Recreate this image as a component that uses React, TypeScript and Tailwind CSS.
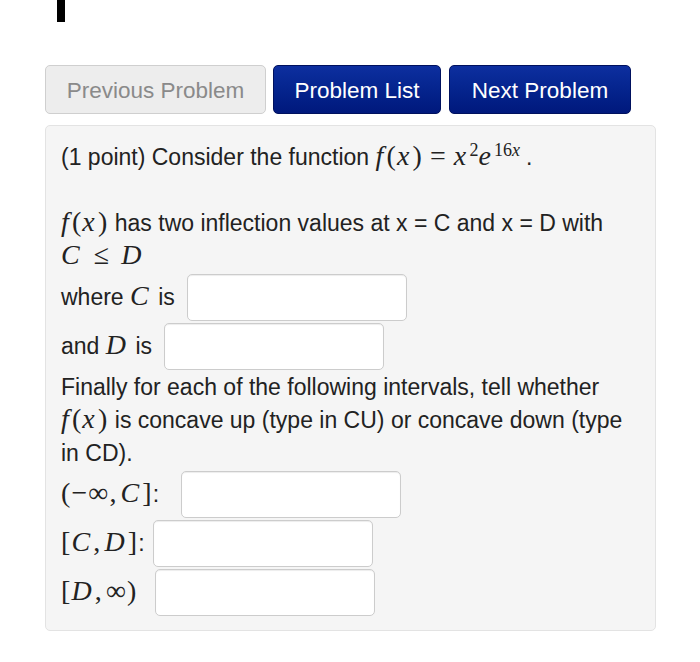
import type { ReactNode } from "react";

function M({ children }: { children: ReactNode }) {
  return (
    <span className="font-['Liberation_Serif',serif] text-[28px] leading-none tracking-[0.04em] whitespace-nowrap">
      {children}
    </span>
  );
}

function V({ children }: { children: ReactNode }) {
  return <i className="pr-[2px]">{children}</i>;
}

function Field({ className = "" }: { className?: string }) {
  return (
    <input
      type="text"
      className={`h-[47px] w-[220px] rounded-[5px] border border-[#cccccc] bg-white shadow-[inset_0_1px_1px_rgba(0,0,0,0.075)] ${className}`}
    />
  );
}

export default function App() {
  return (
    <div className="min-h-[662px] bg-white font-['Liberation_Sans',Arial,sans-serif] text-[#222]">
      <div className="ml-[57px] h-[22px] w-[8px] bg-black" />

      {/* nav buttons */}
      <div className="mt-[43px] ml-[45px] flex gap-[7px]">
        <button className="h-[49px] w-[221px] rounded-[5px] border border-[#cfcfcf] bg-[#ededed] pt-[2px] text-[22.5px] text-[#8a8a8a]">
          Previous Problem
        </button>
        <button className="h-[49px] w-[168px] rounded-[5px] border border-[#00115e] bg-gradient-to-b from-[#0d2f9f] to-[#00187c] pt-[2px] text-[22.5px] text-white">
          Problem List
        </button>
        <button className="ml-[1px] h-[49px] w-[182px] rounded-[5px] border border-[#00115e] bg-gradient-to-b from-[#0d2f9f] to-[#00187c] pt-[2px] text-[22.5px] text-white">
          Next Problem
        </button>
      </div>

      {/* problem body */}
      <div className="mt-[11px] ml-[45px] w-[611px] rounded-[5px] border border-[#e3e3e3] bg-[#f5f5f5] px-[15px] pt-[15px] pb-[14px] text-[23px] leading-[33px]">
        <div>
          (1 point) Consider the function{" "}
          <M>
            <V>f</V>(<V>x</V>)<span className="px-[7px]">=</span>
            <V>x</V>
            <sup className="text-[18px] tracking-normal">2</sup>
            <V>e</V>
            <sup className="text-[18px] tracking-normal">
              16<i>x</i>
            </sup>
          </M>
          <span className="ml-[6px]">.</span>
        </div>
        <div className="h-[33px]" />
        <div>
          <M>
            <V>f</V>(<V>x</V>)
          </M>{" "}
          has two inflection values at x = C and x = D with
          <br />
          <M>
            <V>C</V>
            <span className="px-[11px]">≤</span>
            <V>D</V>
          </M>
        </div>

        <div className="flex h-[49px] items-center">
          <span>
            where{" "}
            <M>
              <V>C</V>
            </M>{" "}
            is
          </span>
          <Field className="ml-[12px]" />
        </div>
        <div className="flex h-[49px] items-center">
          <span>
            and{" "}
            <M>
              <V>D</V>
            </M>{" "}
            is
          </span>
          <Field className="ml-[12px]" />
        </div>

        <p>
          Finally for each of the following intervals, tell whether
          <br />
          <M>
            <V>f</V>(<V>x</V>)
          </M>{" "}
          is concave up (type in CU) or concave down (type
          <br />
          in CD).
        </p>

        <div className="flex h-[48px] items-center">
          <span>
            <M>
              (−∞,<span className="ml-[3px]" />
              <V>C</V>]
            </M>
            :
          </span>
          <Field className="ml-[22px]" />
        </div>
        <div className="flex h-[50px] items-center">
          <span>
            <M>
              [<V>C</V>,<span className="ml-[3px]" />
              <V>D</V>]
            </M>
            :
          </span>
          <Field className="ml-[8px]" />
        </div>
        <div className="flex h-[48px] items-center">
          <span>
            <M>
              [<V>D</V>,<span className="ml-[3px]" />∞)
            </M>
          </span>
          <Field className="ml-[18px]" />
        </div>
      </div>
    </div>
  );
}
